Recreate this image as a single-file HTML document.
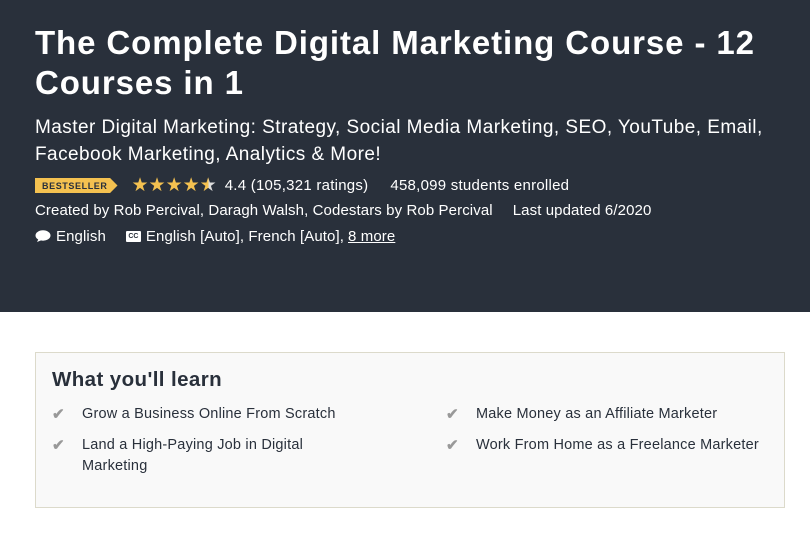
<!DOCTYPE html>
<html><head><meta charset="utf-8"><style>
*{margin:0;padding:0;box-sizing:border-box}
body{width:810px;height:540px;background:#fff;font-family:"Liberation Sans",sans-serif;overflow:hidden}
.top{position:absolute;left:0;top:0;width:810px;height:312px;background:#29303b;color:#fff}
h1{position:absolute;left:35px;top:23px;width:770px;font-size:33px;line-height:40px;font-weight:bold;letter-spacing:0.9px}
.sub{position:absolute;left:35px;top:114px;width:770px;font-size:19px;line-height:27px;letter-spacing:0.45px}
.row{position:absolute;left:35px;font-size:15px;white-space:nowrap;display:flex;align-items:center;letter-spacing:0.1px}
.badge{background:#f4c150;color:#29303b;font-size:9px;font-weight:bold;letter-spacing:.6px;padding:3px 10px 3px 7px;clip-path:polygon(0 0,91% 0,100% 50%,91% 100%,0 100%);margin-right:14px;height:15px;line-height:10px}
.stars{color:#f4c150;font-size:19px;letter-spacing:0px;margin-right:8px}
.box{position:absolute;left:35px;top:352px;width:750px;height:156px;background:#f9f9f9;border:1px solid #dcdacb}
.box h2{position:absolute;left:16px;top:15px;font-size:20.5px;font-weight:bold;color:#29303b;letter-spacing:0.4px}
.it{position:absolute;font-size:14.5px;color:#29303b;line-height:21px;letter-spacing:0.2px}
.ck{position:absolute;color:#999;font-size:15px;font-weight:bold}
</style></head><body>
<div class="top">
<h1>The Complete Digital Marketing Course - 12 Courses in 1</h1>
<div class="sub">Master Digital Marketing: Strategy, Social Media Marketing, SEO, YouTube, Email, Facebook Marketing, Analytics &amp; More!</div>
<div class="row" style="top:174px;letter-spacing:0.25px"><span class="badge">BESTSELLER</span><span class="stars">★★★★<span style="background:linear-gradient(90deg,#f4c150 50%,#ddd 50%);-webkit-background-clip:text;color:transparent">★</span></span><span>4.4 (105,321 ratings)</span><span style="margin-left:22px">458,099 students enrolled</span></div>
<div class="row" style="top:202px">Created by Rob Percival, Daragh Walsh, Codestars by Rob Percival<span style="margin-left:20px">Last updated 6/2020</span></div>
<div class="row" style="top:228px"><svg width="16" height="13" viewBox="0 0 16 13" style="margin-right:5px"><ellipse cx="8" cy="5.5" rx="7.5" ry="5.2" fill="#fff"/><path d="M2 12 L4 8 L7 10Z" fill="#fff"/></svg>English<span style="display:inline-block;margin-left:20px;width:15px;height:11px;background:#fff;color:#29303b;font-size:7px;font-weight:bold;line-height:11px;text-align:center;border-radius:1px;margin-right:5px;letter-spacing:0">CC</span>English [Auto], French [Auto], <u style="margin-left:4px">8 more</u></div>
</div>
<div class="box">
<h2>What you'll learn</h2>
<span class="ck" style="left:16px;top:52px">✔</span><div class="it" style="left:46px;top:51px">Grow a Business Online From Scratch</div>
<span class="ck" style="left:16px;top:83px">✔</span><div class="it" style="left:46px;top:82px;width:290px">Land a High-Paying Job in Digital Marketing</div>
<span class="ck" style="left:410px;top:52px">✔</span><div class="it" style="left:440px;top:51px">Make Money as an Affiliate Marketer</div>
<span class="ck" style="left:410px;top:83px">✔</span><div class="it" style="left:440px;top:82px">Work From Home as a Freelance Marketer</div>
</div>
</body></html>
